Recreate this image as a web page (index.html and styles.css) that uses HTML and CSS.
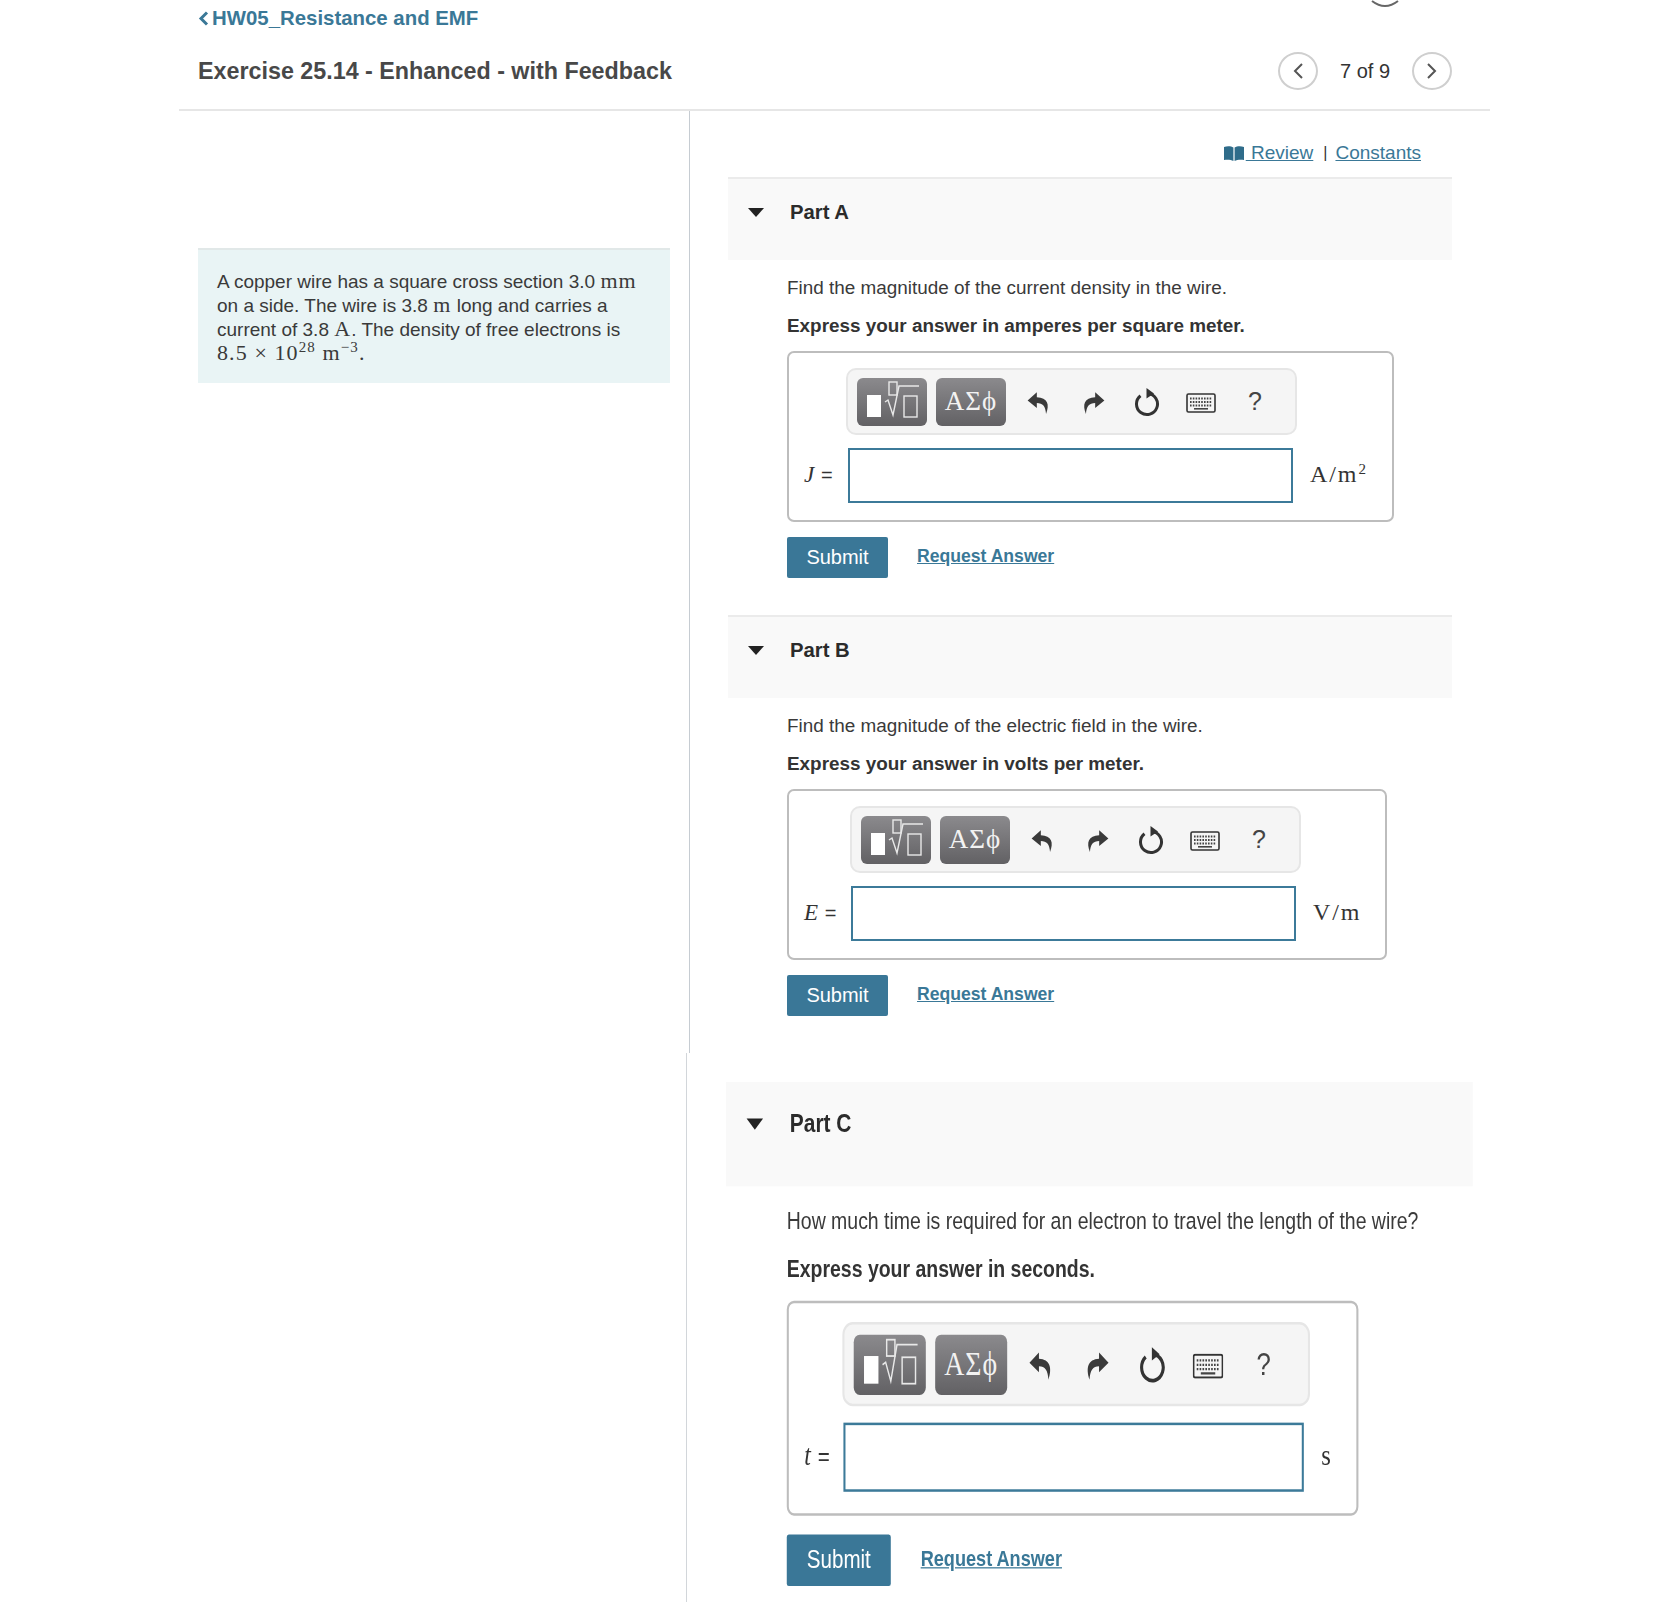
FILE: index.html
```html
<!DOCTYPE html>
<html lang="en">
<head>
<meta charset="utf-8">
<title>Exercise 25.14</title>
<link rel="stylesheet" href="styles.css">
</head>
<body>
<svg class="defs" width="0" height="0" aria-hidden="true">
  <symbol id="i-templates" viewBox="0 0 70 48">
    <rect x="10" y="17" width="14" height="22" fill="#fff"/>
    <rect x="32" y="4" width="8" height="13" fill="none" stroke="#e8e8e8" stroke-width="1.4"/>
    <path d="M28 24 L31 22 L36 37 L42 8 L62 8" fill="none" stroke="#e8e8e8" stroke-width="1.4"/>
    <rect x="47" y="18" width="13" height="21" fill="none" stroke="#e8e8e8" stroke-width="1.4"/>
  </symbol>
  <symbol id="i-undo" viewBox="0 0 24 24">
    <path d="M10 3 L1.5 10.5 L10 17.5 V13 C15.5 13 18 16 18.5 23 C22 14 20 8 10 7.5 Z" fill="#3a3a3a"/>
  </symbol>
  <symbol id="i-redo" viewBox="0 0 24 24">
    <path d="M14 3 L22.5 10.5 L14 17.5 V13 C8.5 13 6 16 5.500 23 C2 14 4 8 14 7.500 Z" fill="#3a3a3a"/>
  </symbol>
  <symbol id="i-reload" viewBox="0 0 26 30">
    <path d="M14 6.600 A10.500 10.500 0 1 1 6.500 8.800" fill="none" stroke="#333" stroke-width="3"/>
    <path d="M12.500 1 L20 6.500 L12.500 11.500 Z" fill="#333"/>
  </symbol>
  <symbol id="i-keys" viewBox="0 0 30 20">
    <rect x="1" y="1" width="28" height="18" rx="1.500" fill="#f5f5f5" stroke="#333" stroke-width="1.600"/>
    <path d="M4 5.500 H26 M4 9 H26 M4 12.500 H26" stroke="#444" stroke-width="1.800" stroke-dasharray="1.600 1.200" fill="none"/>
    <path d="M8 15.800 H22" stroke="#444" stroke-width="1.600"/>
  </symbol>
  <symbol id="i-book" viewBox="0 0 20 15">
    <path d="M0 1 C3 0 7 0 9.400 1.500 V15 C7 13.600 3 13.500 0 14 Z M20 1 C17 0 13 0 10.600 1.500 V15 C13 13.600 17 13.500 20 14 Z" fill="#2f6c8a"/>
  </symbol>
</svg>

<div class="page">
  <header class="topbar">
    <div class="crumbrow">
      <a class="crumb" href="#"><svg class="chev" width="11" height="15" viewBox="0 0 11 15"><path d="M9 1.500 L3 7.500 L9 13.500" fill="none" stroke="#3a7897" stroke-width="3"/></svg>HW05_Resistance and EMF</a>
      <svg class="spinner" width="28" height="8" viewBox="0 0 28 8"><path d="M1 1 Q14 11 27 1" fill="none" stroke="#666" stroke-width="2"/></svg>
    </div>
    <div class="titlerow">
      <h1 class="title">Exercise 25.14 - Enhanced - with Feedback</h1>
      <nav class="pager">
        <span class="circ"><svg width="12" height="18" viewBox="0 0 12 18"><path d="M10 2 L3 9 L10 16" fill="none" stroke="#555" stroke-width="2"/></svg></span>
        <span class="count">7 of 9</span>
        <span class="circ"><svg width="12" height="18" viewBox="0 0 12 18"><path d="M2 2 L9 9 L2 16" fill="none" stroke="#555" stroke-width="2"/></svg></span>
      </nav>
    </div>
  </header>

  <div class="columns">
    <aside class="left">
      <div class="intro">
        A copper wire has a square cross section 3.0 <span class="m">mm</span>
        on a side. The wire is 3.8 <span class="m">m</span> long and carries a current of 3.8 <span class="m">A</span>. The density of free electrons is
        <span class="m nowrap">8.5 × 10<sup>28</sup> m<sup>−3</sup>.</span>
      </div>
    </aside>
    <main class="right">
      <div class="links">
        <svg class="book" width="20" height="15"><use href="#i-book"/></svg>
        <a href="#">&nbsp;Review</a><span class="sep">|</span><a href="#">Constants</a>
      </div>

      <section class="part">
        <div class="part-head"><span class="tri"></span><h2>Part A</h2></div>
        <div class="part-body">
          <p class="q">Find the magnitude of the current density in the wire.</p>
          <p class="ex">Express your answer in amperes per square meter.</p>
          <div class="box box-a">
            <div class="toolbar">
              <span class="tb-btn"><svg width="70" height="48"><use href="#i-templates"/></svg></span>
              <span class="tb-btn greek">ΑΣϕ</span>
              <svg class="ic ic-undo" width="26" height="26"><use href="#i-undo"/></svg>
              <svg class="ic ic-redo" width="26" height="26"><use href="#i-redo"/></svg>
              <svg class="ic ic-reload" width="26" height="30"><use href="#i-reload"/></svg>
              <svg class="ic ic-keys" width="30" height="20"><use href="#i-keys"/></svg>
              <span class="ic-help">?</span>
            </div>
            <div class="answer">
              <span class="lab"><i class="m">J</i> =</span>
              <span class="field"></span>
              <span class="unit m">A/m<sup>2</sup></span>
            </div>
          </div>
          <div class="actions"><span class="submit">Submit</span><a class="req" href="#">Request Answer</a></div>
        </div>
      </section>

      <section class="part">
        <div class="part-head"><span class="tri"></span><h2>Part B</h2></div>
        <div class="part-body">
          <p class="q">Find the magnitude of the electric field in the wire.</p>
          <p class="ex">Express your answer in volts per meter.</p>
          <div class="box box-b">
            <div class="toolbar">
              <span class="tb-btn"><svg width="70" height="48"><use href="#i-templates"/></svg></span>
              <span class="tb-btn greek">ΑΣϕ</span>
              <svg class="ic ic-undo" width="26" height="26"><use href="#i-undo"/></svg>
              <svg class="ic ic-redo" width="26" height="26"><use href="#i-redo"/></svg>
              <svg class="ic ic-reload" width="26" height="30"><use href="#i-reload"/></svg>
              <svg class="ic ic-keys" width="30" height="20"><use href="#i-keys"/></svg>
              <span class="ic-help">?</span>
            </div>
            <div class="answer">
              <span class="lab"><i class="m">E</i> =</span>
              <span class="field"></span>
              <span class="unit m">V/m</span>
            </div>
          </div>
          <div class="actions"><span class="submit">Submit</span><a class="req" href="#">Request Answer</a></div>
        </div>
      </section>
    </main>
  </div>

  <div class="lower">
    <section class="part part-c">
      <div class="part-head"><span class="tri"></span><h2>Part C</h2></div>
      <div class="part-body">
        <p class="q">How much time is required for an electron to travel the length of the wire?</p>
        <p class="ex">Express your answer in seconds.</p>
        <div class="box box-c">
          <div class="toolbar">
            <span class="tb-btn"><svg width="70" height="48"><use href="#i-templates"/></svg></span>
            <span class="tb-btn greek">ΑΣϕ</span>
            <svg class="ic ic-undo" width="26" height="26"><use href="#i-undo"/></svg>
            <svg class="ic ic-redo" width="26" height="26"><use href="#i-redo"/></svg>
            <svg class="ic ic-reload" width="26" height="30"><use href="#i-reload"/></svg>
            <svg class="ic ic-keys" width="30" height="20"><use href="#i-keys"/></svg>
            <span class="ic-help">?</span>
          </div>
          <div class="answer">
            <span class="lab"><i class="m">t</i> =</span>
            <span class="field"></span>
            <span class="unit m">s</span>
          </div>
        </div>
        <div class="actions"><span class="submit">Submit</span><a class="req" href="#">Request Answer</a></div>
      </div>
    </section>
  </div>
</div>
</body>
</html>
```

FILE: styles.css
```css
* { box-sizing: border-box; }
html, body { margin: 0; padding: 0; background: #fff; }
body { font-family: "Liberation Sans", Arial, sans-serif; color: #333; font-size: 19px; }
a { color: #3a7897; }
.defs { position: absolute; }
.m { font-family: "Liberation Serif", "Times New Roman", serif; font-size: 22px; line-height: 0; letter-spacing: 0.05em; }
.nowrap { white-space: nowrap; }
sup { font-size: 15px; line-height: 0; vertical-align: 8px; }

.page { width: 1311px; margin-left: 179px; }

.topbar { height: 111px; border-bottom: 2px solid #e6e6e6; padding: 0 38px 0 19px; }
.crumbrow { display: flex; justify-content: space-between; height: 37px; padding-top: 7px; position: relative; }
.crumb { display: flex; align-items: center; height: 23px; font-weight: 700; font-size: 20.400px; line-height: 23px; text-decoration: none; color: #3a7897; white-space: nowrap; }
.chev { margin-right: 3px; flex: none; }
.spinner { position: absolute; top: 0; right: 53px; }
.titlerow { display: flex; justify-content: space-between; align-items: center; height: 42px; margin-top: 13px; }
.title { margin: 0; font-size: 23.300px; font-weight: 700; color: #484848; }
.pager { display: flex; align-items: center; }
.circ { width: 40px; height: 38px; border: 2px solid #cfcfcf; border-radius: 50%; display: flex; align-items: center; justify-content: center; }
.count { font-size: 20px; width: 94px; text-align: center; color: #333; }

.columns { display: grid; grid-template-columns: 511px 1fr; }
.left { border-right: 1px solid #c6ccd2; padding: 137px 19px 0; }
.intro { background: #e9f4f5; border-top: 2px solid #e1e8e8; height: 135px; padding: 20px 19px 0; font-size: 19px; line-height: 24px; color: #3a3a3a; }
.right { padding: 0 38px 0 38px; }

.links { height: 66px; display: flex; align-items: center; justify-content: flex-end; padding: 18px 31px 0 0; font-size: 19px; }
.book { margin-right: 2px; }
.sep { margin: 0 8px 0 10px; font-size: 16px; color: #333; }

.part { width: 724px; height: 400px; margin-bottom: 38px; }
.part-head { height: 83px; background: #f9f9f9; border-top: 2px solid #ebebeb; display: flex; align-items: flex-start; padding: 22px 0 0 20px; }
.tri { width: 0; height: 0; border-left: 8.500px solid transparent; border-right: 8.500px solid transparent; border-top: 9px solid #222; margin: 7px 26px 0 0; }
.part-head h2 { margin: 0; font-size: 20.300px; line-height: 23px; font-weight: 700; color: #2b2b2b; }
.part-body { padding-left: 59px; }
.q { margin: 0; padding-top: 17px; font-size: 18.900px; line-height: 22px; height: 39px; color: #3a3a3a; }
.ex { margin: 0; padding-top: 16px; font-size: 18.900px; line-height: 22px; height: 52px; font-weight: 700; color: #333; }

.box { border: 2px solid #bdbdbd; border-radius: 7px; height: 171px; padding-top: 15px; }
.box-a { width: 607px; padding-left: 57px; }
.box-b { width: 600px; padding-left: 61px; }
.box-c { width: 555px; padding-left: 52px; }
.toolbar { width: 451px; height: 67px; background: #f5f5f5; border: 2px solid #e6e6e6; border-radius: 10px; display: flex; align-items: center; padding-left: 9px; position: relative; }
.tb-btn { width: 70px; height: 48px; border-radius: 6px; background: linear-gradient(#8b8a8d, #626164); margin-right: 9px; display: flex; align-items: center; justify-content: center; flex: none; }
.greek { font-family: "Liberation Serif", serif; font-size: 27px; color: #f2f2f2; letter-spacing: 1px; }
.ic { flex: none; }
.ic-undo { margin-left: 11px; }
.ic-redo { margin-left: 28px; }
.ic-reload { margin-left: 28px; }
.ic-keys { margin-left: 26px; margin-top: 3px; }
.ic-help { margin-left: 32px; font-size: 25px; color: #444; }

.answer { display: flex; align-items: center; margin-top: 13px; margin-left: -57px; }
.box-b .answer { margin-left: -61px; }
.box-c .answer { margin-left: -52px; }
.lab { width: 59px; padding-left: 15px; font-size: 20px; color: #333; white-space: nowrap; }
.box-b .lab { width: 62px; }
.box-c .lab { width: 53px; }
.lab .m { font-size: 23px; }
.field { width: 445px; height: 55px; border: 2px solid #3c7a99; background: #fff; flex: none; }
.box-c .field { width: 447px; }
.unit { margin-left: 17px; margin-top: -4px; font-size: 24px; line-height: 28px; letter-spacing: 0.08em; }
.unit sup { font-size: 15px; }

.actions { display: flex; align-items: center; margin-top: 15px; }
.submit { width: 101px; height: 41px; background: #3a7797; color: #fff; border-radius: 2px; font-size: 20px; display: flex; align-items: center; justify-content: center; }
.req { margin-left: 29px; margin-top: -2px; font-size: 17.600px; font-weight: 700; white-space: nowrap; }

.lower { height: 549px; margin-left: 507px; border-left: 1px solid #d2d6da; padding: 29px 0 0 39px; }
.part-c { transform: scale(1.03, 1.257); transform-origin: top left; margin: 0; height: 398px; width: 725px; }
.part-c .part-head { border-top: 0; }
.part-c .toolbar { width: 454px; }
```
